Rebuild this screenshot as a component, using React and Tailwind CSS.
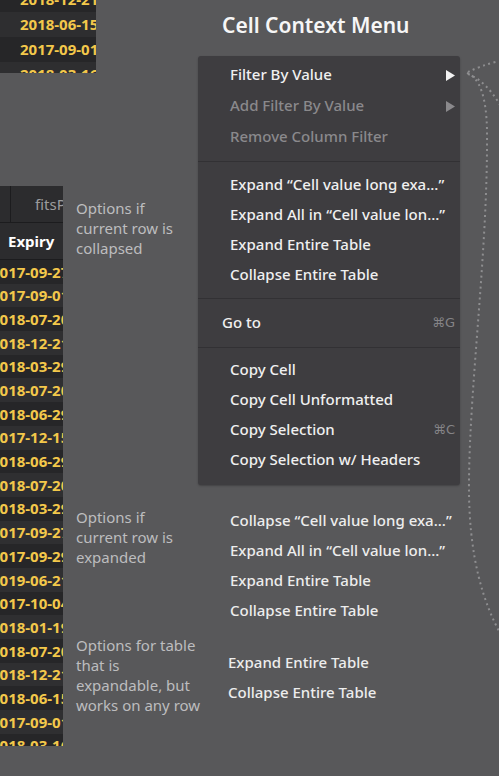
import { useMemo } from "react";

const topDates = ["2018-12-21", "2018-06-15", "2017-09-01", "2018-03-16"];

const expiryDates = [
  "2017-09-27",
  "2017-09-01",
  "2018-07-20",
  "2018-12-21",
  "2018-03-29",
  "2018-07-20",
  "2018-06-29",
  "2017-12-15",
  "2018-06-29",
  "2018-07-20",
  "2018-03-29",
  "2017-09-27",
  "2017-09-29",
  "2019-06-21",
  "2017-10-04",
  "2018-01-19",
  "2018-07-20",
  "2018-12-21",
  "2018-06-15",
  "2017-09-01",
  "2018-03-16",
];

const menuSections = [
  {
    className: "pt-1 pb-2",
    items: [
      { label: "Filter By Value", submenu: true },
      { label: "Add Filter By Value", submenu: true, disabled: true },
      { label: "Remove Column Filter", disabled: true },
    ],
    rowClass: "h-[31px]",
  },
  {
    className: "py-2",
    items: [
      { label: "Expand \u201cCell value long exa...\u201d" },
      { label: "Expand All in \u201cCell value lon...\u201d" },
      { label: "Expand Entire Table" },
      { label: "Collapse Entire Table" },
    ],
    rowClass: "h-[30px]",
  },
  {
    className: "",
    items: [{ label: "Go to", shortcut: "\u2318G", indent: "pl-6" }],
    rowClass: "h-[48px]",
  },
  {
    className: "pt-[7px] pb-[10px]",
    items: [
      { label: "Copy Cell" },
      { label: "Copy Cell Unformatted" },
      { label: "Copy Selection", shortcut: "\u2318C" },
      { label: "Copy Selection w/ Headers" },
    ],
    rowClass: "h-[30px]",
  },
];

function DateCell({ value, className = "" }) {
  return (
    <span className={`whitespace-nowrap text-[15px] font-bold text-[#f3c84b] ${className}`}>
      {value}
    </span>
  );
}

function TopTable() {
  return (
    <div className="h-[73px] w-[96px] overflow-hidden bg-[#262628]">
      <div className="-mt-[13px]">
        {topDates.map((d, i) => (
          <div
            key={d + i}
            className={`flex h-[25px] items-center pb-px pl-5 ${i % 2 ? "bg-[#2e2e30]" : "bg-[#262628]"}`}
          >
            <DateCell value={d} />
          </div>
        ))}
      </div>
    </div>
  );
}

function ExpiryTable() {
  return (
    <div className="h-[560px] w-[63px] shrink-0 overflow-hidden bg-[#29292b]">
      <div className="flex h-[37px] border-b border-[#1c1c1e] bg-[#2c2c2e]">
        <div className="w-[11px] shrink-0 border-r border-[#1c1c1e]" />
        <div className="flex shrink-0 items-center whitespace-nowrap pl-[24px] text-[15px] font-normal text-[#9c9c9e]">fitsPlan</div>
      </div>
      <div className="flex h-[37px] items-center border-b border-[#1c1c1e] bg-[#2c2c2e] pl-2 text-[15px] font-bold text-white">
        Expiry
      </div>
      {expiryDates.map((d, i) => (
        <div
          key={d + i}
          className={`flex h-[23.7px] items-center ${i % 2 ? "bg-[#2f2f31]" : "bg-[#262628]"}`}
        >
          <DateCell value={d} className="-ml-[9px] shrink-0" />
        </div>
      ))}
    </div>
  );
}

function Caret({ muted }) {
  return (
    <svg width="9" height="11" viewBox="0 0 9 11" aria-hidden="true">
      <polygon points="0,0 9,5.5 0,11" fill={muted ? "#8a898c" : "#f2f2f2"} />
    </svg>
  );
}

function ContextMenu() {
  return (
    <div className="w-[262px] rounded-[3px] bg-[#3e3d40] shadow-[0_1px_2px_rgba(0,0,0,0.25)]">
      {menuSections.map((section, si) => (
        <div
          key={si}
          className={`${section.className} ${si > 0 ? "border-t border-[#323134]" : ""}`}
        >
          {section.items.map((item) => (
            <div
              key={item.label}
              className={`flex items-center justify-between pr-[5px] ${section.rowClass} ${item.indent ?? "pl-8"}`}
            >
              <span className={`whitespace-nowrap pb-[2px] ${item.disabled ? "text-[#8a898c]" : "text-[#f0f0f0]"}`}>{item.label}</span>
              {item.submenu && <Caret muted={item.disabled} />}
              {item.shortcut && (
                <span className="font-['DejaVu_Sans',sans-serif] text-[13px] font-normal text-[#858487]">{item.shortcut}</span>
              )}
            </div>
          ))}
        </div>
      ))}
    </div>
  );
}

function Connectors() {
  const dash = useMemo(() => ({ stroke: "#8e8e90", strokeWidth: 2, strokeDasharray: "2 3.5", fill: "none" }), []);
  return (
    <svg className="pointer-events-none absolute inset-0" width="499" height="776" viewBox="0 0 499 776" aria-hidden="true">
      <path d="M468 72 Q480 66 499 61" {...dash} />
      <path d="M468 74 Q486 81 500 105" {...dash} />
      <path d="M467 73 Q486 80 487 130 C488 250 470 380 469 480 C468 560 485 605 500 633" {...dash} />
    </svg>
  );
}

export default function App() {
  return (
    <div className="relative h-[776px] w-[499px] overflow-hidden bg-[#58585a] font-['Noto_Sans',sans-serif] text-[15px] font-medium">
      <div className="flex h-full">
        <div className="flex w-[198px] shrink-0 flex-col">
          <TopTable />
          <div className="mt-[113px] flex">
            <ExpiryTable />
            <div className="ml-[13px] flex flex-col whitespace-nowrap text-[15px] font-normal leading-5 text-[#bdbdbf]">
              <p className="mt-[12px]">
                Options if
                <br />
                current row is
                <br />
                collapsed
              </p>
              <p className="mt-[249px]">
                Options if
                <br />
                current row is
                <br />
                expanded
              </p>
              <p className="mt-[68px]">
                Options for table
                <br />
                that is
                <br />
                expandable, but
                <br />
                works on any row
              </p>
            </div>
          </div>
        </div>

        <div className="flex flex-col">
          <h1 className="ml-6 mt-[11px] whitespace-nowrap text-[21px] font-semibold leading-7 text-[#f6f6f6]">Cell Context Menu</h1>
          <div className="mt-[17px]">
            <ContextMenu />
          </div>
          <ul className="mt-[21px] whitespace-nowrap pl-8 text-[#ededed]">
            <li className="flex h-[30px] items-center pb-[2px]">Collapse “Cell value long exa...”</li>
            <li className="flex h-[30px] items-center pb-[2px]">Expand All in “Cell value lon...”</li>
            <li className="flex h-[30px] items-center pb-[2px]">Expand Entire Table</li>
            <li className="flex h-[30px] items-center pb-[2px]">Collapse Entire Table</li>
          </ul>
          <ul className="mt-[22px] whitespace-nowrap pl-[30px] text-[#ededed]">
            <li className="flex h-[30px] items-center pb-[2px]">Expand Entire Table</li>
            <li className="flex h-[30px] items-center pb-[2px]">Collapse Entire Table</li>
          </ul>
        </div>
      </div>
      <Connectors />
    </div>
  );
}
